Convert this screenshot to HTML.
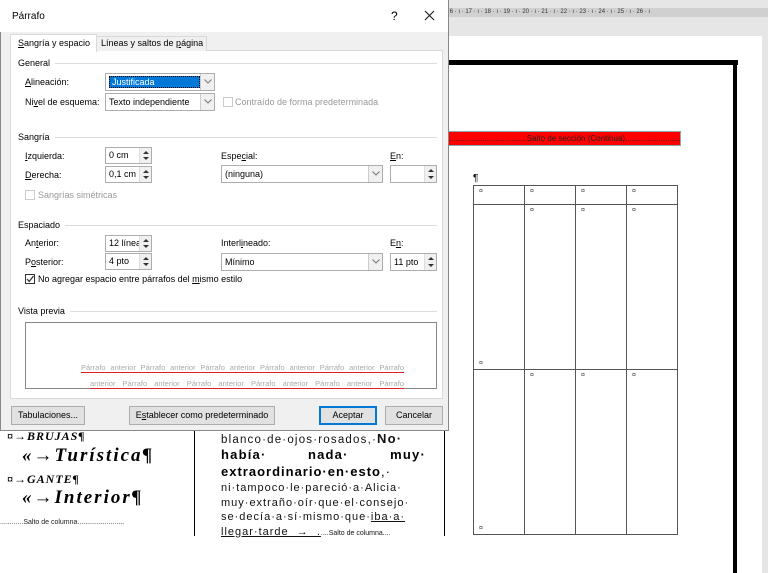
<!DOCTYPE html>
<html><head><meta charset="utf-8"><style>
*{box-sizing:border-box;margin:0;padding:0}
body{width:768px;height:573px;overflow:hidden;background:#fff;position:relative;font-family:"Liberation Sans","DejaVu Sans",sans-serif;font-size:9px;color:#000}
.a{position:absolute}
.lbl{position:absolute;font-size:9px;color:#000;white-space:nowrap}
.grp{position:absolute;font-size:9px;color:#000;white-space:nowrap;background:#fff;padding-right:5px}
.hl{position:absolute;height:1px;background:#dcdcdc}
.inp{position:absolute;background:#fff;border:1px solid #adadad;font-size:9px;padding:2px 0 0 3px;white-space:nowrap;overflow:hidden}
.sp{position:absolute;right:0;top:0;bottom:0;width:12px;border-left:1px solid #ddd;background:#f0f0f0}
.sp:before{content:"";position:absolute;left:3px;top:3px;border:3px solid transparent;border-bottom:3px solid #333;border-top:0}
.sp:after{content:"";position:absolute;left:3px;bottom:3px;border:3px solid transparent;border-top:3px solid #333;border-bottom:0}
.dd{position:absolute;right:0;top:0;bottom:0;width:14px;border-left:1px solid #ccc;background:#f0f0f0}
.dd svg{position:absolute;left:3px;top:5px}
.btn{position:absolute;height:19px;background:#e1e1e1;border:1px solid #adadad;font-size:9px;text-align:center;line-height:17px}
.cb{position:absolute;width:10px;height:10px;border:1px solid #333;background:#fff}
.cell{position:absolute;border:1px solid #555;font-size:7px;color:#444;padding:2px 0 0 5px}
.pv{position:absolute;font-size:7.5px;color:#aaa;white-space:nowrap;border-bottom:1px solid #e02020;text-align:justify;text-align-last:justify;line-height:9px;overflow:hidden}
u{text-decoration:underline}
</style></head><body>
<div class="a" style="left:0;top:0;width:768px;height:36px;background:#e6e6e6"></div>
<div class="a" style="left:448px;top:8px;width:320px;height:9px;background:#d0d0d0;font-size:6px;color:#333;line-height:9px;white-space:nowrap">&nbsp;6 · ı · 17 · ı · 18 · ı · 19 · ı · 20 · ı · 21 · ı · 22 · ı · 23 · ı · 24 · ı · 25 · ı · 26 · ı</div>
<div class="a" style="left:762px;top:36px;width:6px;height:537px;background:#e6e6e6"></div>
<div class="a" style="left:448px;top:60px;width:290px;height:5px;background:#000"></div>
<div class="a" style="left:733px;top:65px;width:4px;height:508px;background:#000"></div>
<div class="a" style="left:448px;top:131px;width:233px;height:15px;background:#f00;border:1px solid #8aa;font-size:8px;line-height:13px;white-space:nowrap;overflow:hidden;color:#222">...................................Salto de sección (Continua).................................</div>
<div class="a" style="left:473px;top:173px;font-size:10px">¶</div>
<div class="cell" style="left:473px;top:185px;width:52px;height:20px">¤</div>
<div class="cell" style="left:524px;top:185px;width:52px;height:20px">¤</div>
<div class="cell" style="left:575px;top:185px;width:52px;height:20px">¤</div>
<div class="cell" style="left:626px;top:185px;width:52px;height:20px">¤</div>
<div class="cell" style="left:473px;top:204px;width:52px;height:166px"><span style="position:absolute;left:5px;bottom:2px">¤</span></div>
<div class="cell" style="left:524px;top:204px;width:52px;height:166px">¤</div>
<div class="cell" style="left:575px;top:204px;width:52px;height:166px">¤</div>
<div class="cell" style="left:626px;top:204px;width:52px;height:166px">¤</div>
<div class="cell" style="left:473px;top:369px;width:52px;height:166px"><span style="position:absolute;left:5px;bottom:2px">¤</span></div>
<div class="cell" style="left:524px;top:369px;width:52px;height:166px">¤</div>
<div class="cell" style="left:575px;top:369px;width:52px;height:166px">¤</div>
<div class="cell" style="left:626px;top:369px;width:52px;height:166px">¤</div>
<div class="a" style="left:444px;top:428px;width:1px;height:108px;background:#000"></div>
<div class="a" style="left:194px;top:428px;width:1px;height:108px;background:#000"></div>
<div class="a" style="left:0;top:268px;font-size:14px;font-weight:bold">▲</div>
<div class="a" style="left:0;top:328px;font-size:14px;font-weight:bold">▲</div>
<div class="a" style="left:0;top:408px;font-size:14px;font-weight:bold">▲</div>
<div class="a" style="left:7px;top:429px;font-family:'Liberation Serif',serif;font-weight:bold;font-style:italic;font-size:12px;letter-spacing:1px">¤→BRUJAS¶</div>
<div class="a" style="left:22px;top:445px;font-family:'Liberation Serif',serif;font-weight:bold;font-style:italic;font-size:19px;letter-spacing:2px">«→Turística¶</div>
<div class="a" style="left:7px;top:472px;font-family:'Liberation Serif',serif;font-weight:bold;font-style:italic;font-size:12px;letter-spacing:1px">¤→GANTE¶</div>
<div class="a" style="left:22px;top:487px;font-family:'Liberation Serif',serif;font-weight:bold;font-style:italic;font-size:19px;letter-spacing:2px">«→Interior¶</div>
<div class="a" style="left:0;top:519px;font-size:7px;white-space:nowrap;color:#222">............Salto de columna........................</div>
<div class="a" style="left:221px;top:430px;width:205px;font-size:11.5px;line-height:17px;letter-spacing:1.2px;color:#111;white-space:nowrap">blanco·de·ojos·rosados,·<b style="font-size:13px">No·</b></div>
<div class="a" style="left:221px;top:446px;width:205px;font-size:13px;font-weight:bold;letter-spacing:1.2px;line-height:17px;display:flex;justify-content:space-between"><span>había·</span><span>nada·</span><span>muy·</span></div>
<div class="a" style="left:221px;top:463px;font-size:13px;font-weight:bold;letter-spacing:1px;line-height:17px;white-space:nowrap">extraordinario·en·esto<span style="font-weight:normal">,·</span></div>
<div class="a" style="left:221px;top:481px;font-size:11px;letter-spacing:1px;line-height:14.5px;color:#111;white-space:nowrap">ni·tampoco·le·pareció·a·Alicia·<br>muy·extraño·oír·que·el·consejo·<br>se·decía·a·sí·mismo·que·<u>iba·a·</u><br><u>llegar·tarde&nbsp;&nbsp;→&nbsp;&nbsp;.</u><span style="font-size:7px;letter-spacing:0">....Salto de columna....</span></div>
<!-- dialog -->
<div class="a" style="left:0;top:0;width:449px;height:431px;background:#f0f0f0;border:1px solid #888;border-top:0"></div>
<div class="a" style="left:0;top:0;width:448px;height:32px;background:#fff"></div>
<div class="lbl" style="left:12px;top:11px;font-size:10px">Párrafo</div>
<div class="lbl" style="left:391px;top:9px;font-size:12px">?</div>
<svg class="a" style="left:424px;top:10px" width="11" height="11"><path d="M1 1L10 10M10 1L1 10" stroke="#222" stroke-width="1.2"/></svg>
<div class="a" style="left:10px;top:50px;width:433px;height:349px;background:#fff;border:1px solid #d9d9d9"></div>
<div class="a" style="left:10px;top:34px;width:87px;height:18px;background:#fff;border:1px solid #d9d9d9;border-bottom:0"></div>
<div class="a" style="left:96px;top:36px;width:111px;height:15px;background:#f0f0f0;border:1px solid #d9d9d9;border-bottom:0"></div>
<div class="lbl" style="left:18px;top:38px"><u>S</u>angría y espacio</div>
<div class="lbl" style="left:101px;top:38px">Líneas y saltos de <u>p</u>ágina</div>
<div class="hl" style="left:18px;top:63px;width:419px"></div><div class="grp" style="left:18px;top:58px">General</div>
<div class="lbl" style="left:25px;top:77px"><u>A</u>lineación:</div>
<div class="inp" style="left:105px;top:73px;width:110px;height:18px"><span style="background:#0078d7;color:#fff;padding:0 2px;border:1px dotted #000;display:inline-block;width:91px">Justificada</span><div class="dd"><svg width="8" height="5"><path d="M0.5 0.5L4 4L7.5 0.5" fill="none" stroke="#777"/></svg></div></div>
<div class="lbl" style="left:25px;top:97px">Ni<u>v</u>el de esquema:</div>
<div class="inp" style="left:105px;top:93px;width:110px;height:18px;padding-top:3px">Texto independiente<div class="dd"><svg width="8" height="5"><path d="M0.5 0.5L4 4L7.5 0.5" fill="none" stroke="#777"/></svg></div></div>
<div class="cb" style="left:223px;top:97px;border-color:#ccc"></div>
<div class="lbl" style="left:235px;top:97px;color:#999">Contraído de forma predeterminada</div>
<div class="hl" style="left:18px;top:137px;width:419px"></div><div class="grp" style="left:18px;top:132px">Sangría</div>
<div class="lbl" style="left:25px;top:151px"><u>I</u>zquierda:</div>
<div class="inp" style="left:105px;top:147px;width:47px;height:17px">0 cm<div class="sp"></div></div>
<div class="lbl" style="left:25px;top:170px"><u>D</u>erecha:</div>
<div class="inp" style="left:105px;top:166px;width:47px;height:17px">0,1 cm<div class="sp"></div></div>
<div class="lbl" style="left:221px;top:151px">Espe<u>c</u>ial:</div>
<div class="inp" style="left:221px;top:165px;width:162px;height:18px;padding-top:3px">(ninguna)<div class="dd"><svg width="8" height="5"><path d="M0.5 0.5L4 4L7.5 0.5" fill="none" stroke="#777"/></svg></div></div>
<div class="lbl" style="left:390px;top:151px"><u>E</u>n:</div>
<div class="inp" style="left:390px;top:165px;width:47px;height:18px"><div class="sp"></div></div>
<div class="cb" style="left:25px;top:190px;border-color:#ccc"></div>
<div class="lbl" style="left:38px;top:190px;color:#999">Sangrías simétricas</div>
<div class="hl" style="left:18px;top:225px;width:419px"></div><div class="grp" style="left:18px;top:220px">Espaciado</div>
<div class="lbl" style="left:25px;top:238px">An<u>t</u>erior:</div>
<div class="inp" style="left:105px;top:235px;width:47px;height:17px">12 líneas<div class="sp"></div></div>
<div class="lbl" style="left:25px;top:257px">P<u>o</u>sterior:</div>
<div class="inp" style="left:105px;top:253px;width:47px;height:17px">4 pto<div class="sp"></div></div>
<div class="lbl" style="left:221px;top:238px">Interl<u>i</u>neado:</div>
<div class="inp" style="left:221px;top:253px;width:162px;height:18px;padding-top:3px">Mínimo<div class="dd"><svg width="8" height="5"><path d="M0.5 0.5L4 4L7.5 0.5" fill="none" stroke="#777"/></svg></div></div>
<div class="lbl" style="left:390px;top:238px">E<u>n</u>:</div>
<div class="inp" style="left:390px;top:253px;width:47px;height:18px;padding-top:3px">11 pto<div class="sp"></div></div>
<div class="cb" style="left:25px;top:274px"><svg width="8" height="8" style="position:absolute;left:0;top:0"><path d="M1 4L3.2 6.5L7.5 1" fill="none" stroke="#222" stroke-width="1.1"/></svg></div>
<div class="lbl" style="left:38px;top:274px">No agregar espacio entre párrafos del <u>m</u>ismo estilo</div>
<div class="hl" style="left:18px;top:311px;width:419px"></div><div class="grp" style="left:18px;top:306px">Vista previa</div>
<div class="a" style="left:25px;top:322px;width:412px;height:67px;border:1px solid #888;background:#fff"></div>
<div class="pv" style="left:81px;top:363px;width:323px">Párrafo anterior Párrafo anterior Párrafo anterior Párrafo anterior Párrafo anterior Párrafo</div>
<div class="pv" style="left:90px;top:379px;width:314px">anterior Párrafo anterior Párrafo anterior Párrafo anterior Párrafo anterior Párrafo</div>
<div class="btn" style="left:11px;top:406px;width:74px">Tabulaciones...</div>
<div class="btn" style="left:129px;top:406px;width:146px">E<u>s</u>tablecer como predeterminado</div>
<div class="btn" style="left:319px;top:406px;width:58px;border:1px solid #0078d7;box-shadow:inset 0 0 0 1px #0078d7">Aceptar</div>
<div class="btn" style="left:385px;top:406px;width:58px">Cancelar</div>
</body></html>
